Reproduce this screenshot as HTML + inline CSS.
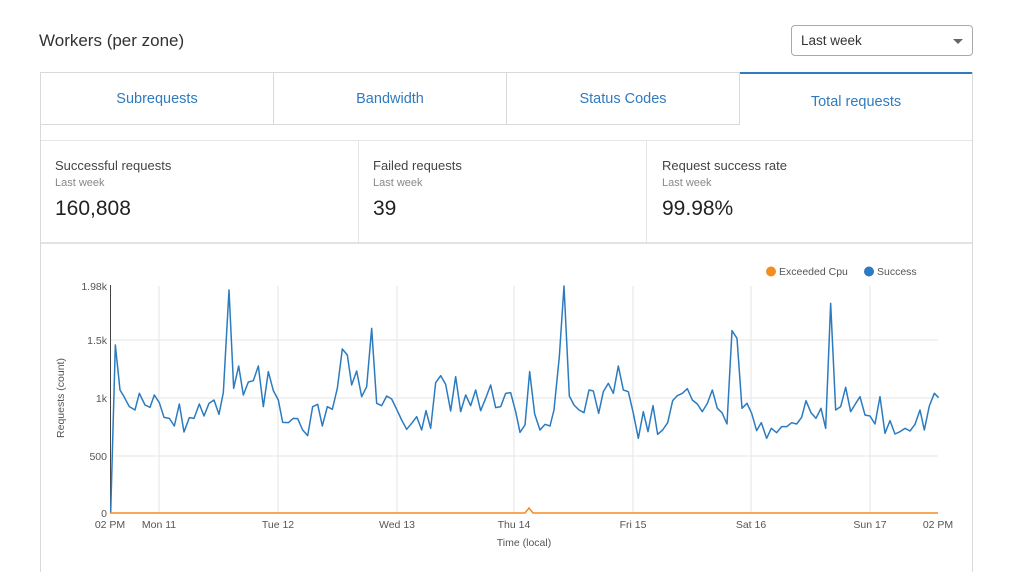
<!DOCTYPE html>
<html><head><meta charset="utf-8"><style>
body{margin:0;background:#fff;font-family:"Liberation Sans",sans-serif;width:1024px;height:561px;overflow:hidden;position:relative}
.a{position:absolute}
.tab{position:absolute;top:73px;height:52px;line-height:52px;text-align:center;color:#2f7bbf;font-size:14.5px;border-right:1px solid #d9d9d9;border-bottom:1px solid #d9d9d9;box-sizing:border-box}
.lab{font-size:13px;color:#444}
.sub{font-size:11px;color:#888}
.val{font-size:21px;color:#222}
</style></head><body>
<div class="a" style="left:39px;top:31px;font-size:17px;color:#333">Workers (per zone)</div>
<div class="a" style="left:791px;top:25px;width:182px;height:31px;border:1px solid #aaa;border-radius:4px;box-sizing:border-box"><span class="a" style="left:9px;top:7px;font-size:13.5px;color:#333">Last week</span><span class="a" style="right:9px;top:13px;width:0;height:0;border-left:5px solid transparent;border-right:5px solid transparent;border-top:5px solid #666"></span></div>
<div class="a" style="left:40px;top:72px;width:933px;height:500px;border:1px solid #d9d9d9;border-bottom:none;box-sizing:border-box"></div>
<div class="tab" style="left:41px;width:233px">Subrequests</div>
<div class="tab" style="left:274px;width:233px">Bandwidth</div>
<div class="tab" style="left:507px;width:233px">Status Codes</div>
<div class="tab" style="left:740px;width:232px;border-right:none;border-bottom:none;border-top:2px solid #2f7bbf;top:72px;line-height:56px">Total requests</div>
<div class="a" style="left:41px;top:140px;width:931px;border-top:1px solid #e6e6e6"></div>
<div class="a" style="left:41px;top:242px;width:931px;border-top:2px solid #e3e3e3"></div>
<div class="a" style="left:358px;top:141px;height:101px;border-left:1px solid #e6e6e6"></div>
<div class="a" style="left:646px;top:141px;height:101px;border-left:1px solid #e6e6e6"></div>
<div class="a lab" style="left:55px;top:158px">Successful requests</div><div class="a sub" style="left:55px;top:177px">Last week</div><div class="a val" style="left:55px;top:197px">160,808</div>
<div class="a lab" style="left:373px;top:158px">Failed requests</div><div class="a sub" style="left:373px;top:177px">Last week</div><div class="a val" style="left:373px;top:197px">39</div>
<div class="a lab" style="left:662px;top:158px">Request success rate</div><div class="a sub" style="left:662px;top:177px">Last week</div><div class="a val" style="left:662px;top:197px">99.98%</div>
<svg class="a" style="left:0;top:0" width="1024" height="561" font-family="Liberation Sans, sans-serif" font-size="10.5" fill="#555">
<g stroke="#e6e6e6" stroke-width="1">
<line x1="110" y1="340" x2="938" y2="340"/><line x1="110" y1="398" x2="938" y2="398"/><line x1="110" y1="456" x2="938" y2="456"/>
<line x1="159" y1="286" x2="159" y2="513"/><line x1="278" y1="286" x2="278" y2="513"/><line x1="397" y1="286" x2="397" y2="513"/><line x1="514" y1="286" x2="514" y2="513"/><line x1="633" y1="286" x2="633" y2="513"/><line x1="751" y1="286" x2="751" y2="513"/><line x1="870" y1="286" x2="870" y2="513"/>
</g>
<line x1="110.5" y1="285" x2="110.5" y2="513" stroke="#444"/>
<g text-anchor="end"><text x="107" y="290">1.98k</text><text x="107" y="344">1.5k</text><text x="107" y="402">1k</text><text x="107" y="460">500</text><text x="107" y="517">0</text></g>
<g text-anchor="middle"><text x="110" y="528">02 PM</text><text x="159" y="528">Mon 11</text><text x="278" y="528">Tue 12</text><text x="397" y="528">Wed 13</text><text x="514" y="528">Thu 14</text><text x="633" y="528">Fri 15</text><text x="751" y="528">Sat 16</text><text x="870" y="528">Sun 17</text><text x="938" y="528">02 PM</text>
<text x="524" y="546">Time (local)</text>
<text transform="translate(64,398) rotate(-90)">Requests (count)</text></g>
<circle cx="771" cy="271.5" r="5" fill="#f68b1f"/><text x="779" y="275">Exceeded Cpu</text>
<circle cx="869" cy="271.5" r="5" fill="#2c7bbf"/><text x="877" y="275">Success</text>
<g transform="translate(40,260) scale(0.33333)" fill="none" stroke="#2c7bbf" stroke-width="4.5" stroke-linejoin="round">
<polyline points="212,760 226,255 240,390 252,410 268,440 285,450 298,400 315,435 330,442 343,405 358,428 372,472 388,475 403,498 418,432 432,516 448,473 462,475 478,432 492,468 507,430 522,420 537,463 550,398 567,90 581,385 596,318 610,405 625,366 640,362 655,318 670,440 685,335 700,392 715,420 728,487 745,488 760,475 773,476 788,510 803,527 818,440 833,433 847,498 862,440 877,448 892,385 907,267 922,285 935,375 950,333 965,410 980,380 995,205 1010,430 1025,437 1040,408 1055,417 1070,448 1085,480 1100,508 1115,490 1130,470 1145,510 1158,452 1172,505 1187,368 1202,347 1217,373 1232,453 1247,350 1262,455 1277,405 1292,437 1307,390 1322,452 1337,415 1352,375 1367,443 1382,440 1397,400 1412,398 1427,455 1440,517 1455,495 1469,335 1484,462 1500,510 1515,493 1530,498 1542,450 1558,290 1572,78 1588,408 1602,435 1617,450 1632,458 1647,390 1660,393 1676,460 1690,395 1705,370 1720,400 1735,318 1750,390 1765,395 1780,460 1795,535 1810,455 1824,515 1839,437 1853,523 1868,510 1883,488 1898,422 1912,407 1927,400 1942,386 1957,420 1972,432 1987,455 2002,430 2017,390 2032,445 2046,458 2061,492 2076,212 2091,235 2106,445 2121,430 2135,460 2150,512 2164,488 2180,535 2194,505 2210,518 2225,500 2240,500 2255,488 2270,492 2285,472 2298,422 2313,458 2328,475 2343,445 2357,505 2372,130 2387,450 2402,440 2417,382 2432,455 2446,432 2460,410 2475,465 2490,468 2505,492 2520,410 2535,520 2550,482 2565,522 2580,515 2595,505 2610,513 2625,493 2640,450 2653,510 2668,438 2683,400 2696,413"/>
</g>
<polyline points="110,513 525,513 529,508 533,513 938,513" fill="none" stroke="#f68b1f" stroke-width="1.5"/>
</svg>
</body></html>
